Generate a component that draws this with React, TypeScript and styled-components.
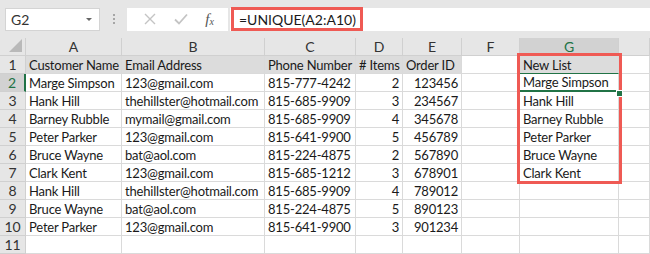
import React from "react";
import styled, { createGlobalStyle } from "styled-components";

const GlobalStyle = createGlobalStyle`
  html, body {
    margin: 0;
    padding: 0;
    background: #ffffff;
  }
  body {
    font-family: "Lato", "Liberation Sans", sans-serif;
    overflow: hidden;
  }
`;

type Row = [string, string, string, string, string, string];

const rows: Row[] = [
  ["Marge Simpson", "123@gmail.com", "815-777-4242", "2", "123456", "Marge Simpson"],
  ["Hank Hill", "thehillster@hotmail.com", "815-685-9909", "3", "234567", "Hank Hill"],
  ["Barney Rubble", "mymail@gmail.com", "815-685-9909", "4", "345678", "Barney Rubble"],
  ["Peter Parker", "123@gmail.com", "815-641-9900", "5", "456789", "Peter Parker"],
  ["Bruce Wayne", "bat@aol.com", "815-224-4875", "2", "567890", "Bruce Wayne"],
  ["Clark Kent", "123@gmail.com", "815-685-1212", "3", "678901", "Clark Kent"],
  ["Hank Hill", "thehillster@hotmail.com", "815-685-9909", "4", "789012", ""],
  ["Bruce Wayne", "bat@aol.com", "815-224-4875", "5", "890123", ""],
  ["Peter Parker", "123@gmail.com", "815-641-9900", "3", "901234", ""],
  ["", "", "", "", "", ""],
];

const columns = ["A", "B", "C", "D", "E", "F", "G", ""];
const ROW_H = 18;
const COLS = "26px 96px 143px 91px 47px 59px 58px 99px 1fr";

function App() {
  return (
    <>
      <GlobalStyle />
      <Page>
        <Toolbar>
          <NameBox>
            <span>G2</span>
            <DropArrow />
          </NameBox>
          <Grip>
            <i />
            <i />
            <i />
          </Grip>
          <FormulaButtons>
            <svg width="14" height="14" viewBox="0 0 14 14">
              <path d="M2 2 L12 12 M12 2 L2 12" stroke="#c4c4c4" strokeWidth="1.4" fill="none" />
            </svg>
            <svg width="16" height="14" viewBox="0 0 16 14">
              <path d="M2 7.5 L6 11.5 L14 2.5" stroke="#c4c4c4" strokeWidth="1.8" fill="none" />
            </svg>
            <FxLabel>
              f<sub>x</sub>
            </FxLabel>
          </FormulaButtons>
          <FormulaInput>
            <FormulaText>=UNIQUE(A2:A10)</FormulaText>
          </FormulaInput>
        </Toolbar>

        <Sheet>
          <SheetGrid>
            <Corner>
              <svg width="13" height="13" viewBox="0 0 13 13">
                <path d="M13 0 L13 13 L0 13 Z" fill="#b9b9b9" />
              </svg>
            </Corner>
            {columns.map((c, i) => (
              <ColHeader key={i} $active={c === "G"}>
                {c}
              </ColHeader>
            ))}

            <RowHeader>1</RowHeader>
            <Cell $fill>Customer Name</Cell>
            <Cell $fill>Email Address</Cell>
            <Cell $fill>Phone Number</Cell>
            <Cell $fill># Items</Cell>
            <Cell $fill>Order ID</Cell>
            <Cell />
            <Cell $fill>New List</Cell>
            <Cell />

            {rows.map((r, i) => (
              <React.Fragment key={i}>
                <RowHeader $active={i === 0}>{i + 2}</RowHeader>
                <Cell>{r[0]}</Cell>
                <Cell>{r[1]}</Cell>
                <Cell>{r[2]}</Cell>
                <Cell $right>{r[3]}</Cell>
                <Cell $right>{r[4]}</Cell>
                <Cell />
                {i === 0 ? <ActiveCell>{r[5]}</ActiveCell> : <Cell>{r[5]}</Cell>}
                <Cell />
              </React.Fragment>
            ))}
          </SheetGrid>
          <Highlight />
          <FillHandle />
        </Sheet>
      </Page>
    </>
  );
}

export default App;

const Page = styled.div`
  width: 650px;
  height: 254px;
  overflow: hidden;
  background: #ffffff;
  color: #1a1a1a;
`;

const Toolbar = styled.div`
  height: 38px;
  background: #e6e6e6;
  display: flex;
  align-items: center;
  padding: 0 0 0 5px;
  box-sizing: border-box;
`;

const NameBox = styled.div`
  width: 95px;
  height: 23px;
  background: #ffffff;
  border: 1px solid #d4d4d4;
  box-sizing: border-box;
  display: flex;
  align-items: center;
  justify-content: space-between;
  padding: 0 7px 0 5px;
  font-size: 14px;
  color: #333;
`;

const DropArrow = styled.span`
  width: 0;
  height: 0;
  border-left: 3px solid transparent;
  border-right: 3px solid transparent;
  border-top: 3px solid #666;
`;

const Grip = styled.div`
  width: 27px;
  display: flex;
  flex-direction: column;
  align-items: center;
  gap: 2px;

  i {
    width: 2px;
    height: 2px;
    background: #a6a6a6;
  }
`;

const FormulaButtons = styled.div`
  width: 101px;
  height: 23px;
  background: #ffffff;
  display: flex;
  align-items: center;
  justify-content: space-around;
  padding: 0 6px 0 8px;
  box-sizing: border-box;
`;

const FxLabel = styled.span`
  font-family: "Liberation Serif", serif;
  font-style: italic;
  font-size: 15px;
  color: #555;
  sub {
    font-size: 10px;
    vertical-align: -1px;
  }
`;

const FormulaInput = styled.div`
  flex: 1;
  height: 23px;
  margin-left: 2px;
  background: #ffffff;
  display: flex;
  align-items: center;
`;

const FormulaText = styled.span`
  border: 3px solid #ef5a54;
  height: 24px;
  box-sizing: border-box;
  padding: 0 4px 0 5px;
  margin-left: 1px;
  display: flex;
  align-items: center;
  font-size: 14px;
  color: #1a1a1a;
`;

const Sheet = styled.div`
  position: relative;
`;

const SheetGrid = styled.div`
  display: grid;
  grid-template-columns: ${COLS};
  grid-auto-rows: ${ROW_H}px;
`;

const Corner = styled.div`
  background: #e6e6e6;
  border-right: 1px solid #d0d0d0;
  border-bottom: 1px solid #d0d0d0;
  box-sizing: border-box;
  display: flex;
  align-items: flex-end;
  justify-content: flex-end;
  padding: 0 3px 3px 0;
`;

const ColHeader = styled.div<{ $active?: boolean }>`
  background: ${(p) => (p.$active ? "#d2d2d2" : "#e6e6e6")};
  color: ${(p) => (p.$active ? "#217346" : "#333")};
  border-right: 1px solid #d0d0d0;
  border-bottom: 1px solid ${(p) => (p.$active ? "#217346" : "#d0d0d0")};
  box-sizing: border-box;
  display: flex;
  align-items: center;
  justify-content: center;
  font-size: 14px;
`;

const RowHeader = styled.div<{ $active?: boolean }>`
  background: ${(p) => (p.$active ? "#d2d2d2" : "#e6e6e6")};
  color: ${(p) => (p.$active ? "#217346" : "#333")};
  border-right: ${(p) => (p.$active ? "2px solid #217346" : "1px solid #d0d0d0")};
  border-bottom: 1px solid #d0d0d0;
  box-sizing: border-box;
  display: flex;
  align-items: center;
  justify-content: center;
  font-size: 14px;
`;

const Cell = styled.div<{ $fill?: boolean; $right?: boolean }>`
  background: ${(p) => (p.$fill ? "#dcdcdc" : "#ffffff")};
  border-right: 1px solid #dadada;
  border-bottom: 1px solid #dadada;
  box-sizing: border-box;
  display: flex;
  align-items: center;
  justify-content: ${(p) => (p.$right ? "flex-end" : "flex-start")};
  padding: 0 3px;
  font-size: 13px;
  letter-spacing: -0.2px;
  white-space: nowrap;
  overflow: hidden;
  color: #1a1a1a;
`;

const ActiveCell = styled(Cell)`
  border-top: 1px solid #217346;
  border-bottom: 2px solid #217346;
  margin-top: -1px;
  height: ${ROW_H + 1}px;
`;

const Highlight = styled.div`
  position: absolute;
  left: 517px;
  top: 15px;
  width: 105px;
  height: 131px;
  border: 3px solid #ef5a54;
  box-sizing: border-box;
  pointer-events: none;
`;

const FillHandle = styled.div`
  position: absolute;
  left: 616px;
  top: 52px;
  width: 5px;
  height: 5px;
  background: #217346;
  border: 1px solid #ffffff;
`;
